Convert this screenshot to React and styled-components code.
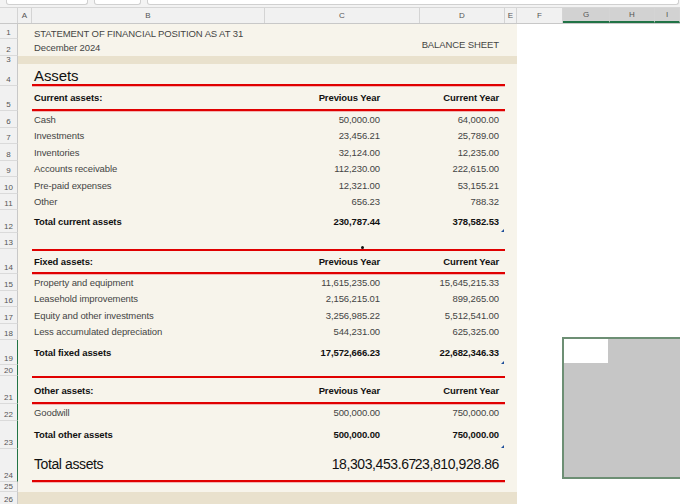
import React from "react";
import styled, { createGlobalStyle } from "styled-components";

const Global = createGlobalStyle`
  body { margin: 0; background: #fff; font-family: "Liberation Sans", Arial, sans-serif; }
`;

const COLS = "18px 14px 233px 155px 85px 12px 46px 47px 45px 25px";

const Page = styled.div`
  position: relative;
  width: 680px;
  height: 504px;
  overflow: hidden;
  background: #fff;
`;

const TopStrip = styled.div`
  height: 8px;
  background: #f3f3f3;
  display: flex;
  gap: 6px;
  padding-left: 6px;
  border-bottom: 1px solid #d6d6d6;
  box-sizing: border-box;
`;

const Tab = styled.div`
  width: ${(p) => p.w}px;
  height: 4px;
  background: #fff;
  border: 1px solid #d0d0d0;
  border-top: none;
  border-radius: 0 0 3px 3px;
`;

const HeadRow = styled.div`
  display: grid;
  grid-template-columns: ${COLS};
  height: 15px;
  background: #f1f1f1;
  border-bottom: 1px solid #c8c8c8;
  font-size: 8px;
  color: #555;
`;

const ColHead = styled.div`
  display: flex;
  align-items: center;
  justify-content: center;
  border-right: 1px solid #d4d4d4;
  background: ${(p) => (p.sel ? "#d2d2d2" : "transparent")};
  border-bottom: ${(p) => (p.sel ? "2px solid #217346" : "none")};
`;

const Row = styled.div`
  display: grid;
  grid-template-columns: ${COLS};
  height: ${(p) => p.h}px;
`;

const RowHead = styled.div`
  background: #f1f1f1;
  border-right: 1px solid ${(p) => (p.sel ? "#217346" : "#c8c8c8")};
  border-bottom: 1px solid #dadada;
  font-size: 8px;
  color: #555;
  display: flex;
  align-items: flex-end;
  justify-content: center;
  padding-bottom: 1px;
  box-sizing: border-box;
  line-height: ${(p) => (p.tiny ? "7px" : "9px")};
`;

const Sheet = styled.div`
  grid-column: 2 / span 5;
  background: ${(p) => (p.band ? "#e9e1cd" : "#f7f4eb")};
  display: grid;
  grid-template-columns: 14px 233px 155px 85px 12px;
`;

const Lines = styled.div`
  grid-column: 2 / span 3;
  display: grid;
  grid-template-columns: 233px 155px 85px;
  border-top: ${(p) => (p.top ? "2px solid #e00000" : "none")};
  border-bottom: ${(p) => (p.bottom ? "2px solid #e00000" : "none")};
  box-shadow: ${(p) => (p.bottom ? "0 1px 0 #f3b3b3" : "none")};
  position: relative;
`;

const Cell = styled.div`
  display: flex;
  align-items: ${(p) => p.v || "center"};
  justify-content: ${(p) => (p.right ? "flex-end" : "flex-start")};
  padding: 0 ${(p) => p.pr ?? (p.right ? 6 : 2)}px 0 2px;
  font-size: ${(p) => p.size || 9.5}px;
  font-weight: ${(p) => (p.bold ? 700 : 400)};
  color: ${(p) => (p.bold ? "#111" : "#444")};
  letter-spacing: ${(p) => (p.tight ? "-0.4px" : "-0.1px")};
  white-space: nowrap;
  position: relative;
`;

const Corner = styled.span`
  position: absolute;
  right: 1px;
  bottom: 1px;
  width: 0;
  height: 0;
  border-left: 3px solid transparent;
  border-bottom: 3px solid #1f4e9a;
`;

const Dot = styled.span`
  width: 3px;
  height: 3px;
  border-radius: 50%;
  background: #111;
  margin-right: 50px;
`;

const Selection = styled.div`
  position: absolute;
  left: 562px;
  top: 337px;
  width: 120px;
  height: 142px;
  background: #c6c6c6;
  border: 2px solid #6d8f74;
  box-sizing: border-box;
`;

const ActiveCell = styled.div`
  width: 44px;
  height: 24px;
  background: #fff;
`;

const heads = ["A", "B", "C", "D", "E", "F", "G", "H", "I"];

const rows = [
  { n: 1, h: 15, kind: "title1" },
  { n: 2, h: 17, kind: "title2" },
  { n: 3, h: 8, kind: "band" },
  { n: 4, h: 22, kind: "assets" },
  { n: 5, h: 25, kind: "head", label: "Current assets:", bottom: true },
  { n: 6, d: ["Cash", "50,000.00", "64,000.00"] },
  { n: 7, d: ["Investments", "23,456.21", "25,789.00"] },
  { n: 8, d: ["Inventories", "32,124.00", "12,235.00"] },
  { n: 9, d: ["Accounts receivable", "112,230.00", "222,615.00"] },
  { n: 10, d: ["Pre-paid expenses", "12,321.00", "53,155.21"] },
  { n: 11, d: ["Other", "656.23", "788.32"] },
  { n: 12, h: 23, total: true, d: ["Total current assets", "230,787.44", "378,582.53"] },
  { n: 13, h: 16, kind: "dot" },
  { n: 14, h: 25, kind: "head", label: "Fixed assets:", top: true, bottom: true },
  { n: 15, d: ["Property and equipment", "11,615,235.00", "15,645,215.33"] },
  { n: 16, d: ["Leasehold improvements", "2,156,215.01", "899,265.00"] },
  { n: 17, d: ["Equity and other investments", "3,256,985.22", "5,512,541.00"] },
  { n: 18, d: ["Less accumulated depreciation", "544,231.00", "625,325.00"] },
  { n: 19, h: 25, total: true, sel: true, d: ["Total fixed assets", "17,572,666.23", "22,682,346.33"] },
  { n: 20, h: 11, sel: true, kind: "empty" },
  { n: 21, h: 28, sel: true, kind: "head", label: "Other assets:", top: true, bottom: true },
  { n: 22, sel: true, d: ["Goodwill", "500,000.00", "750,000.00"] },
  { n: 23, h: 28, total: true, sel: true, d: ["Total other assets", "500,000.00", "750,000.00"] },
  { n: 24, h: 33, sel: true, kind: "grand", bottom: true },
  { n: 25, h: 10, kind: "empty" },
  { n: 26, h: 14, kind: "band" },
];

const CPAD = 40;

function Content({ r }) {
  if (r.kind === "title1")
    return (
      <Lines>
        <Cell size={9.5} v="flex-end">STATEMENT OF FINANCIAL POSITION AS AT 31</Cell>
        <Cell />
        <Cell />
      </Lines>
    );
  if (r.kind === "title2")
    return (
      <Lines>
        <Cell size={9.5}>December 2024</Cell>
        <Cell />
        <Cell right size={9.5} v="flex-start">BALANCE SHEET</Cell>
      </Lines>
    );
  if (r.kind === "assets")
    return (
      <Lines bottom>
        <Cell size={15} v="flex-end" bold={false} style={{ color: "#111" }}>Assets</Cell>
        <Cell />
        <Cell />
      </Lines>
    );
  if (r.kind === "head")
    return (
      <Lines top={r.top} bottom={r.bottom}>
        <Cell bold>{r.label}</Cell>
        <Cell bold right pr={CPAD}>Previous Year</Cell>
        <Cell bold right>Current Year</Cell>
      </Lines>
    );
  if (r.kind === "grand")
    return (
      <Lines bottom>
        <Cell size={14} tight style={{ color: "#111" }}>Total assets</Cell>
        <Cell size={14} tight right pr={4} style={{ color: "#111" }}>18,303,453.67</Cell>
        <Cell size={14} tight right pr={6} style={{ color: "#111" }}>23,810,928.86</Cell>
      </Lines>
    );
  if (r.kind === "dot")
    return (
      <Lines>
        <Cell />
        <Cell right v="flex-end"><Dot /></Cell>
        <Cell />
      </Lines>
    );
  if (r.d)
    return (
      <Lines>
        <Cell bold={r.total}>{r.d[0]}</Cell>
        <Cell bold={r.total} right pr={CPAD}>{r.d[1]}</Cell>
        <Cell bold={r.total} right>
          {r.d[2]}
          {r.total && <Corner />}
        </Cell>
      </Lines>
    );
  return null;
}

export default function App() {
  return (
    <Page>
      <Global />
      <TopStrip>
        <Tab w={80} />
        <Tab w={45} />
        <Tab w={530} />
      </TopStrip>
      <HeadRow>
        <ColHead />
        {heads.map((h) => (
          <ColHead key={h} sel={["G", "H", "I"].includes(h)}>{h}</ColHead>
        ))}
      </HeadRow>
      {rows.map((r) => (
        <Row key={r.n} h={r.h || 16.5}>
          <RowHead sel={r.sel} tiny={r.h < 12}>{r.n}</RowHead>
          <Sheet band={r.kind === "band"}>
            <div />
            <Content r={r} />
          </Sheet>
        </Row>
      ))}
      <Selection>
        <ActiveCell />
      </Selection>
    </Page>
  );
}
